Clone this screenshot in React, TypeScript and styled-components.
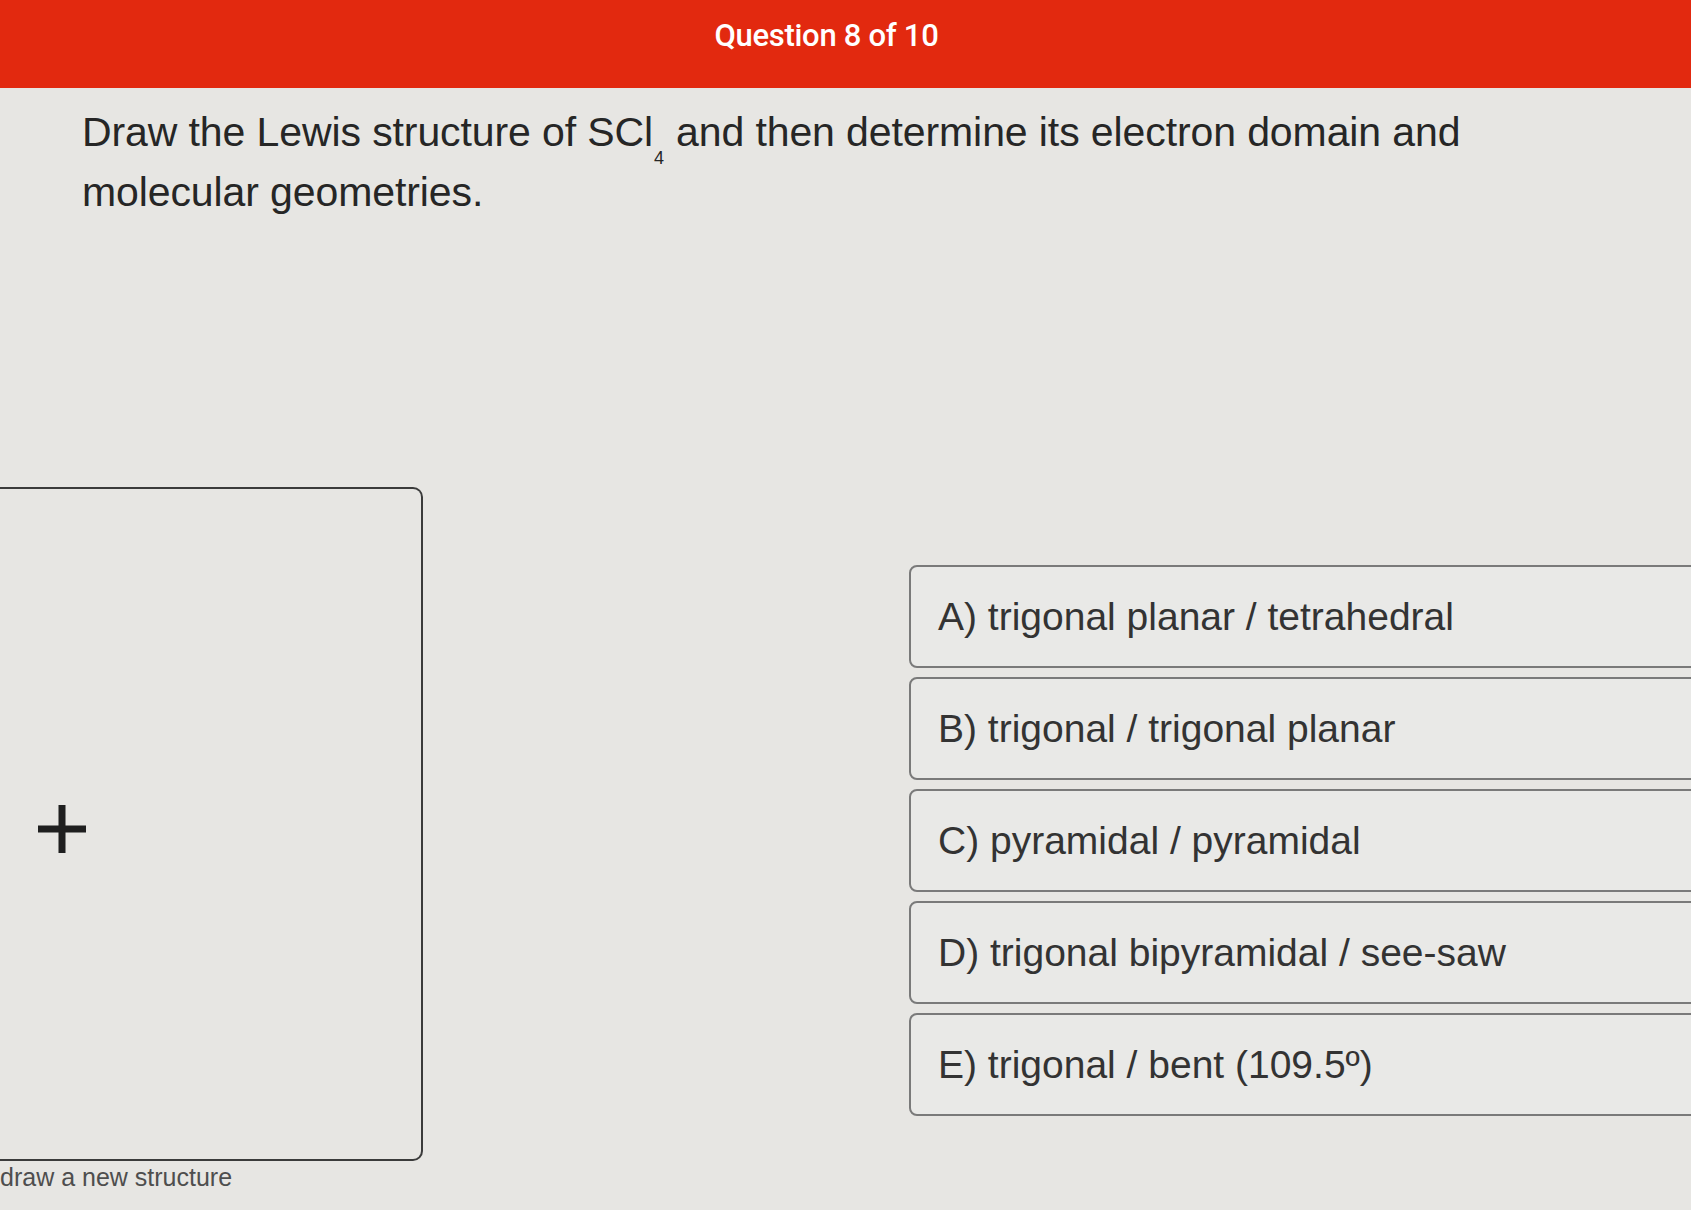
import React from "react";
import styled, { createGlobalStyle } from "styled-components";

const GlobalStyle = createGlobalStyle`
  html, body {
    margin: 0;
    padding: 0;
    background: #e7e6e3;
    overflow: hidden;
  }
  body {
    font-family: "Liberation Sans", Arial, sans-serif;
  }
`;

const Page = styled.div`
  width: 1691px;
  height: 1210px;
  display: flex;
  flex-direction: column;
  background: #e7e6e3;
  overflow: hidden;
`;

const Header = styled.header`
  height: 88px;
  flex: none;
  background: #e2290f;
  display: flex;
  justify-content: center;
  align-items: flex-start;
  padding: 17px 38px 0 0;
  box-sizing: border-box;
`;

const HeaderTitle = styled.h1`
  margin: 0;
  font-family: "Roboto", "Liberation Sans", sans-serif;
  font-weight: 500;
  font-size: 31px;
  line-height: 38px;
  color: #ffffff;
  letter-spacing: -0.3px;
`;

const Prompt = styled.p`
  margin: 14px 0 0 82px;
  font-size: 41px;
  line-height: 60px;
  color: #262626;
  letter-spacing: -0.1px;
`;

const Sub = styled.sub`
  font-size: 18px;
  vertical-align: -18px;
  line-height: 0;
  margin: 0 12px 0 1px;
`;

const Workspace = styled.div`
  display: flex;
  margin-top: 265px;
`;

const CanvasColumn = styled.div`
  width: 423px;
  flex: none;
  display: flex;
  flex-direction: column;
`;

const Canvas = styled.div`
  height: 674px;
  box-sizing: border-box;
  border: 2px solid #3b3b3b;
  border-left: none;
  border-radius: 0 10px 10px 0;
  display: flex;
  align-items: center;
  padding: 10px 0 0 35px;
`;

const Caption = styled.div`
  margin-top: 1px;
  font-size: 25px;
  line-height: 30px;
  color: #4e4e4e;
`;

const Options = styled.div`
  margin-left: 486px;
  margin-top: 78px;
  display: flex;
  flex-direction: column;
  gap: 9px;
  flex: none;
`;

const Option = styled.button`
  width: 860px;
  height: 103px;
  box-sizing: border-box;
  border: 2px solid #7a7a7a;
  border-radius: 8px;
  background: #e9e9e7;
  display: flex;
  align-items: center;
  padding: 0 0 0 27px;
  font-family: "Liberation Sans", Arial, sans-serif;
  font-size: 39px;
  color: #333333;
  text-align: left;
  cursor: pointer;
`;

const PlusIcon = () => (
  <svg width="54" height="54" viewBox="0 0 54 54" aria-hidden>
    <path d="M27 3 V51 M3 27 H51" stroke="#1f1f1f" strokeWidth="7" fill="none" />
  </svg>
);

const options = [
  "A) trigonal planar / tetrahedral",
  "B) trigonal / trigonal planar",
  "C) pyramidal / pyramidal",
  "D) trigonal bipyramidal / see-saw",
  "E) trigonal / bent (109.5º)",
];

export default function App() {
  return (
    <>
      <GlobalStyle />
      <Page>
        <Header>
          <HeaderTitle>Question 8 of 10</HeaderTitle>
        </Header>
        <Prompt>
          Draw the Lewis structure of SCl<Sub>4</Sub>and then determine its electron domain and
          <br />
          molecular geometries.
        </Prompt>
        <Workspace>
          <CanvasColumn>
            <Canvas>
              <PlusIcon />
            </Canvas>
            <Caption>draw a new structure</Caption>
          </CanvasColumn>
          <Options>
            {options.map((o) => (
              <Option key={o}>{o}</Option>
            ))}
          </Options>
        </Workspace>
      </Page>
    </>
  );
}
